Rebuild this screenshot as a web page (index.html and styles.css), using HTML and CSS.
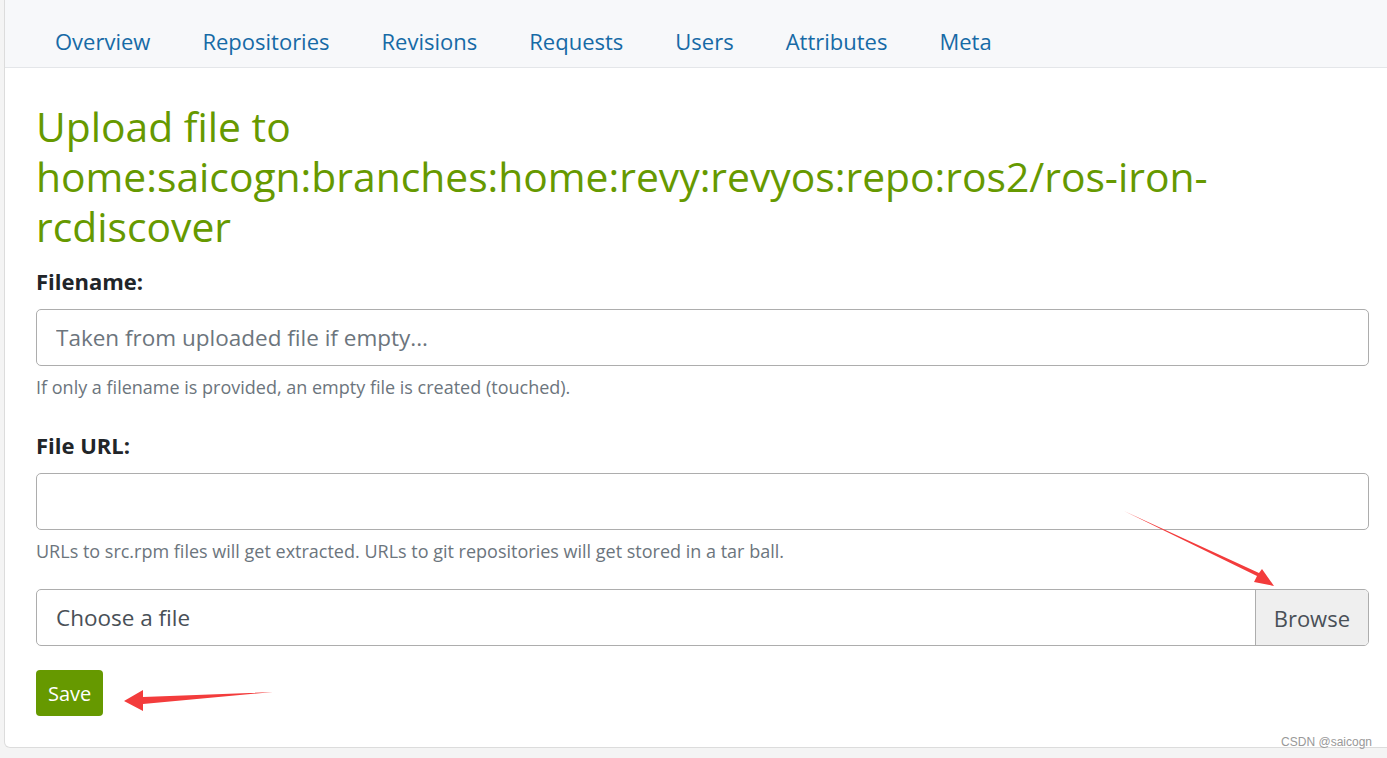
FILE: index.html
```html
<!DOCTYPE html>
<html lang="en">
<head>
  <meta charset="UTF-8" />
  <title>Upload file</title>
  <link rel="stylesheet" href="styles.css">
</head>
<body>
  <div class="card">
    <!-- Tabs -->
    <div class="card-header">
      <ul class="nav-tabs">
        <li><a href="#" class="nav-link">Overview</a></li>
        <li><a href="#" class="nav-link">Repositories</a></li>
        <li><a href="#" class="nav-link">Revisions</a></li>
        <li><a href="#" class="nav-link">Requests</a></li>
        <li><a href="#" class="nav-link">Users</a></li>
        <li><a href="#" class="nav-link">Attributes</a></li>
        <li><a href="#" class="nav-link">Meta</a></li>
      </ul>
    </div>

    <!-- Form -->
    <div class="card-body">
      <h3 class="page-title">Upload file to home:saicogn:branches:home:revy:revyos:repo:ros2/ros-iron-rcdiscover</h3>

      <div class="form-group">
        <label class="form-label">Filename:</label>
        <input type="text" class="form-control" placeholder="Taken from uploaded file if empty...">
        <small class="form-text">If only a filename is provided, an empty file is created (touched).</small>
      </div>

      <div class="form-group form-group-last">
        <label class="form-label">File URL:</label>
        <input type="text" class="form-control">
        <small class="form-text">URLs to src.rpm files will get extracted. URLs to git repositories will get stored in a tar ball.</small>
      </div>

      <div class="custom-file">
        <span class="custom-file-label">Choose a file</span>
        <span class="custom-file-btn">Browse</span>
      </div>

      <button class="btn-save">Save</button>
    </div>
  </div>

  <!-- Annotation arrows -->
  <svg class="arrows" width="1387" height="758" viewBox="0 0 1387 758">
    <polygon points="1124,511 1257,576 1254,582 1274,586 1262,569 1259,573" fill="#f33c3c"/>
    <polygon points="273,692 143,697 143,690 124,701 143,711 143,704" fill="#f33c3c"/>
  </svg>

  <div class="watermark">CSDN @saicogn</div>
</body>
</html>
```

FILE: styles.css
```css
html, body {
  overflow: hidden;
}

body {
  margin: 0;
  height: 758px;
  background-color: #f4f4f4;
  font-family: "Open Sans", "Noto Sans", sans-serif;
  color: #212529;
}

/* Card */
.card {
  margin-left: 4px;
  margin-right: -14px;
  background-color: #fff;
  border: 1px solid #dcdcdc;
  border-top: none;
  border-radius: 0 0 6px 6px;
}

.card-header {
  height: 68px;
  box-sizing: border-box;
  padding-top: 14px;
  background-color: #f7f8fa;
  border-bottom: 1px solid #e4e6e9;
}

.nav-tabs {
  list-style: none;
  margin: 0;
  padding: 0 0 0 24px;
  display: flex;
  height: 100%;
  align-items: center;
}

.nav-link {
  display: block;
  padding: 0 26px;
  font-size: 22px;
  color: #166aa6;
  text-decoration: none;
}

.card-body {
  padding: 33px 31px 31px;
}

.page-title {
  margin: 0 0 15px;
  font-size: 40.8px;
  line-height: 50px;
  font-weight: 500;
  color: #669900;
}

/* Form */
.form-group {
  margin-bottom: 31px;
}

.form-group-last {
  margin-bottom: 26px;
}

.form-label {
  display: block;
  font-size: 22px;
  line-height: 30px;
  font-weight: 700;
  margin-bottom: 13px;
}

.form-control {
  display: block;
  width: 100%;
  height: 57px;
  box-sizing: border-box;
  padding: 0 19px;
  border: 1px solid #adadad;
  border-radius: 5px;
  font-family: inherit;
  font-size: 22.5px;
  color: #495057;
}

.form-control::placeholder {
  color: #6c757d;
}

.form-text {
  display: block;
  margin-top: 9px;
  font-size: 18px;
  line-height: 24px;
  color: #6c757d;
}

.custom-file {
  display: flex;
  height: 57px;
  box-sizing: border-box;
  border: 1px solid #adadad;
  border-radius: 5px;
  overflow: hidden;
  margin-bottom: 24px;
}

.custom-file-label {
  flex: 1;
  display: flex;
  align-items: center;
  padding: 0 19px;
  font-size: 22.5px;
  color: #495057;
}

.custom-file-btn {
  display: flex;
  align-items: center;
  padding: 0 18px;
  font-size: 22px;
  color: #495057;
  background-color: #efefef;
  border-left: 1px solid #adadad;
}

.btn-save {
  display: block;
  height: 46px;
  padding: 0 12px;
  border: none;
  border-radius: 4px;
  background-color: #669900;
  color: #fff;
  font-family: inherit;
  font-size: 20px;
}

/* Annotation layer */
.arrows {
  position: absolute;
  left: 0;
  top: 0;
  pointer-events: none;
}

.watermark {
  position: absolute;
  right: 15px;
  top: 735px;
  font-family: "Liberation Sans", Arial, sans-serif;
  font-size: 12px;
  color: #999;
}
```
